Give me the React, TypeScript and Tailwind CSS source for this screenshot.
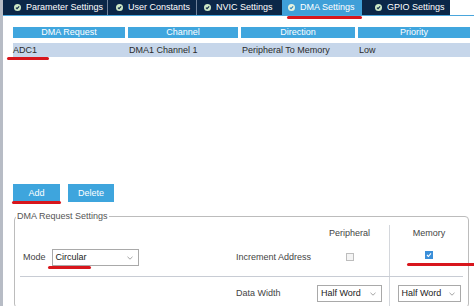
import React from "react";

const tabs = [
  { label: "Parameter Settings", w: "w-[105px]", pl: "pl-[11px]", sep: true },
  { label: "User Constants", w: "w-[89px]", pl: "pl-[8px]", sep: true },
  { label: "NVIC Settings", w: "w-[85px]", pl: "pl-[7px]", sep: false },
  { label: "DMA Settings", w: "w-[80px]", pl: "pl-[6px]", sep: false, active: true },
  { label: "GPIO Settings", w: "w-[88px]", pl: "pl-[13px]", sep: false },
];

const CheckDot = ({ active }: { active?: boolean }) => (
  <svg width="7" height="7" viewBox="0 0 8 8" className="shrink-0">
    <circle cx="4" cy="4" r="4" fill={active ? "#e4f3df" : "#cde8c6"} />
    <polyline
      points="2.2,4.1 3.5,5.4 5.9,2.8"
      fill="none"
      stroke={active ? "#2f86bf" : "#0b2748"}
      strokeWidth="1.3"
    />
  </svg>
);

const Chevron = () => (
  <svg width="6" height="4" viewBox="0 0 6 4" className="shrink-0">
    <polyline points="0.5,0.8 3,3.2 5.5,0.8" fill="none" stroke="#8a8a8a" strokeWidth="0.8" />
  </svg>
);

const Select = ({ value, w }: { value: string; w: string }) => (
  <div className={`${w} flex h-[17px] shrink-0 items-center justify-between border border-[#a9a9a9] bg-white pl-[3px] pr-[5px] text-[#222]`}>
    <span>{value}</span>
    <Chevron />
  </div>
);

const RedMark = ({ cls }: { cls: string }) => (
  <div className={`absolute h-[3px] rounded-full bg-[#d8161c] ${cls}`} />
);

export default function App() {
  return (
    <div className="relative flex h-[306px] w-[474px] overflow-hidden bg-white font-['Liberation_Sans',Arial,sans-serif] text-[9px] leading-none">
      {/* left window edge */}
      <div className="w-[3px] shrink-0 bg-[#b7bcc5]" />

      <div className="flex min-w-0 flex-1 flex-col">
        {/* tab bar */}
        <div className="flex h-[16px] shrink-0 border-b border-[#4aa6dc]">
          {tabs.map((t) => (
            <div
              key={t.label}
              className={`${t.w} ${t.pl} flex shrink-0 items-center gap-[5px] text-white ${
                t.active ? "bg-[#3f9fd8]" : "bg-[#0b2748]"
              } ${t.sep ? "border-r border-[#6f819a]" : ""}`}
            >
              <CheckDot active={t.active} />
              <span className="whitespace-nowrap">{t.label}</span>
            </div>
          ))}
        </div>

        <div className="flex flex-col items-start pl-[10px] pr-[4px]">
          {/* table header */}
          <div className="mt-[11px] grid h-[11px] grid-cols-[112px_110px_114px_112px] gap-x-[3px] text-white">
            {["DMA Request", "Channel", "Direction", "Priority"].map((h) => (
              <div key={h} className="flex items-center justify-center bg-[#40a6de]">
                {h}
              </div>
            ))}
          </div>

          {/* selected row */}
          <div className="mt-[5px] grid h-[14px] grid-cols-[112px_110px_114px_112px] gap-x-[3px] bg-[#c6d6ea] text-[#2b2b2b]">
            <div className="flex items-center">ADC1</div>
            <div className="flex items-center pl-[1px]">DMA1 Channel 1</div>
            <div className="flex items-center pl-[1px]">Peripheral To Memory</div>
            <div className="flex items-center pl-[1px]">Low</div>
          </div>

          {/* buttons */}
          <div className="mt-[127px] flex gap-[8px] text-white">
            <button className="flex h-[18px] w-[47px] items-center justify-center bg-[#3ea5dd]">Add</button>
            <button className="flex h-[18px] w-[46px] items-center justify-center bg-[#3ea5dd]">Delete</button>
          </div>

          {/* settings group */}
          <div className="relative mt-[14px] ml-[1px] w-[455px] shrink-0 rounded-[4px] border border-[#bcbcbc] pt-[8px] text-[#444]">
            <span className="absolute -top-[5px] left-[1px] bg-white px-[1px] leading-[9px] text-[#555]">
              DMA Request Settings
            </span>

            <div className="flex h-[17px] items-center">
              <div className="w-[214px] shrink-0" />
              <div className="w-[81px] shrink-0" />
              <div className="flex w-[79px] shrink-0 justify-center">Peripheral</div>
              <div className="flex h-full w-[79px] shrink-0 items-center justify-center border-l border-[#d4d7dc]">Memory</div>
            </div>

            <div className="flex h-[34px] items-start">
              <div className="flex w-[214px] shrink-0 items-center gap-[6px] pt-[7px] pl-[8px]">
                <span>Mode</span>
                <Select value="Circular" w="w-[87px]" />
              </div>
              <div className="mt-[7px] flex h-[17px] w-[81px] shrink-0 items-center whitespace-nowrap pl-[7px]">Increment Address</div>
              <div className="flex w-[79px] shrink-0 justify-center pt-[11px]">
                <div className="h-[8px] w-[8px] border border-[#bdbdbd] bg-[#f4f4f4]" />
              </div>
              <div className="flex h-full w-[79px] shrink-0 justify-center border-l border-[#d4d7dc] pt-[9px]">
                <div className="flex h-[8px] w-[8px] items-center justify-center bg-[#3b8fd9]">
                  <svg width="6" height="6" viewBox="0 0 6 6">
                    <polyline points="1,3 2.4,4.5 5,1.4" fill="none" stroke="white" strokeWidth="1.1" />
                  </svg>
                </div>
              </div>
            </div>

            <div className="mx-[5px] h-px bg-[#c8ccd4]" />

            <div className="flex h-[30px] items-start">
              <div className="w-[214px] shrink-0" />
              <div className="mt-[8px] flex h-[17px] w-[81px] shrink-0 items-center whitespace-nowrap pl-[7px]">Data Width</div>
              <div className="flex w-[79px] shrink-0 justify-center pt-[8px]">
                <Select value="Half Word" w="w-[65px]" />
              </div>
              <div className="flex h-full w-[79px] shrink-0 justify-center border-l border-[#d4d7dc] pt-[8px]">
                <Select value="Half Word" w="w-[63px]" />
              </div>
            </div>
          </div>
        </div>
      </div>

      {/* red annotation marks */}
      <RedMark cls="left-[287px] top-[16px] w-[75px]" />
      <RedMark cls="left-[7px] top-[57px] w-[42px]" />
      <RedMark cls="left-[12px] top-[201px] w-[49px]" />
      <RedMark cls="left-[48px] top-[266px] w-[43px]" />
      <RedMark cls="left-[407px] top-[263px] w-[70px]" />
    </div>
  );
}
